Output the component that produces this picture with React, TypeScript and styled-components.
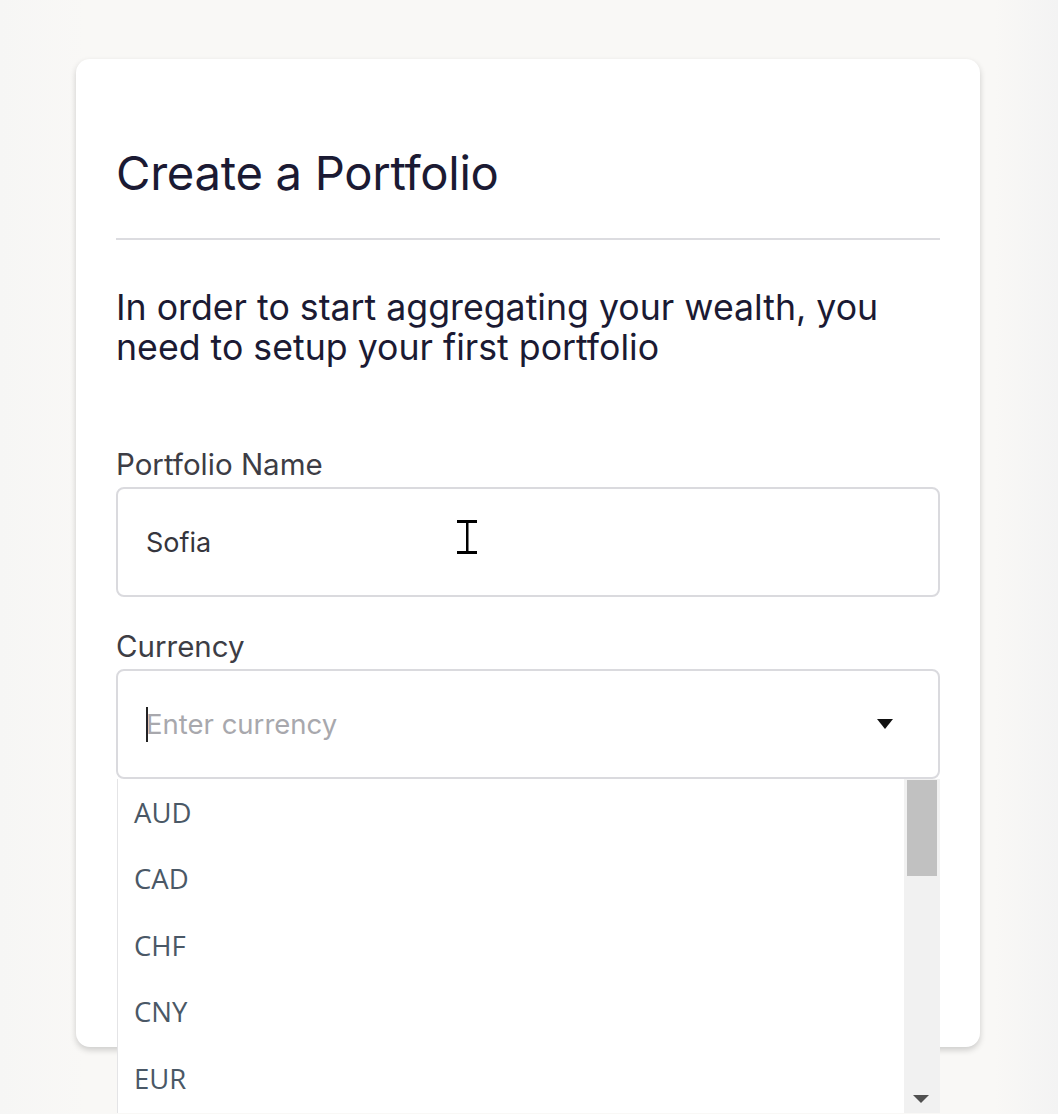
import React from "react";
import styled, { createGlobalStyle } from "styled-components";

const Global = createGlobalStyle`
  html, body { margin: 0; padding: 0; }
  body {
    background: linear-gradient(90deg, #f6f6f5 0%, #f9f8f6 8%, #f9f8f6 94%, #f3f3f3 100%);
    font-family: "Inter", "Open Sans", sans-serif;
    min-height: 1114px;
  }
`;

const Page = styled.div`
  display: flex;
  justify-content: center;
  padding: 59px 2px 0 0;
  height: 1114px;
  box-sizing: border-box;
  overflow: hidden;
`;

const Card = styled.section`
  width: 904px;
  height: 988px;
  box-sizing: border-box;
  background: #fff;
  border-radius: 14px;
  box-shadow: 0 3px 6px rgba(0, 0, 0, 0.18);
  padding: 86px 40px 40px;
  display: flex;
  flex-direction: column;
`;

const Title = styled.h1`
  margin: 0;
  font-size: 47.2px;
  font-weight: 400;
  line-height: 56px;
  color: #1b1a33;
  letter-spacing: -0.3px;
`;

const Divider = styled.hr`
  border: none;
  border-top: 2px solid #dcdce0;
  margin: 37px 0 0;
`;

const Intro = styled.p`
  margin: 47px 0 0;
  font-size: 35.7px;
  line-height: 40px;
  color: #1b1a33;
  font-weight: 400;
`;

const Field = styled.div<{ $top: number }>`
  margin-top: ${(p) => p.$top}px;
  display: flex;
  flex-direction: column;
  position: relative;
`;

const Label = styled.label`
  font-size: 29.5px;
  line-height: 34px;
  color: #3d3d45;
  margin-bottom: 6px;
`;

const InputBox = styled.div`
  height: 110px;
  box-sizing: border-box;
  border: 2px solid #dadade;
  border-radius: 8px;
  display: flex;
  align-items: center;
  padding: 0 28px;
  position: relative;
`;

const Value = styled.span<{ $placeholder?: boolean }>`
  font-size: ${(p) => (p.$placeholder ? "27.5px" : "27px")};
  color: ${(p) => (p.$placeholder ? "#a8a8ad" : "#35353d")};
  flex: 1;
  display: flex;
  align-items: center;
`;

const Caret = styled.span`
  display: inline-block;
  width: 2px;
  height: 35px;
  background: #222;
  margin-right: -2px;
`;

const Arrow = styled.svg`
  width: 18px;
  height: 12px;
  margin-right: 16px;
`;

const MouseCursor = styled.svg`
  position: absolute;
  left: 339px;
  top: 31px;
  width: 20px;
  height: 34px;
`;

const Dropdown = styled.div`
  position: absolute;
  left: -1px;
  right: -2px;
  top: calc(100% + 2px);
  height: 334px;
  background: #fff;
  border-left: 1px solid #e4e4e6;
  display: flex;
  z-index: 5;
`;

const List = styled.ul`
  list-style: none;
  margin: 0;
  padding: 0;
  flex: 1;
  overflow: hidden;
`;

const Item = styled.li`
  height: 66.5px;
  display: flex;
  align-items: center;
  padding-left: 16px;
  font-family: "Open Sans", sans-serif;
  font-size: 27.5px;
  color: #4a5866;
`;

const Track = styled.div`
  width: 36px;
  background: #f1f1f1;
  display: flex;
  flex-direction: column;
  justify-content: space-between;
  align-items: center;
`;

const Thumb = styled.div`
  width: 30px;
  height: 96px;
  background: #c1c1c1;
  margin-top: 1px;
  margin-right: 1px;
`;

const ScrollArrow = styled.svg`
  width: 16px;
  height: 10px;
  margin-bottom: 9px;
  margin-right: 2px;
`;

const currencies = ["AUD", "CAD", "CHF", "CNY", "EUR"];

export default function App() {
  return (
    <>
      <Global />
      <Page>
        <Card>
          <Title>Create a Portfolio</Title>
          <Divider />
          <Intro>
            In order to start aggregating your wealth, you
            <br />
            need to setup your first portfolio
          </Intro>
          <Field $top={80}>
            <Label>Portfolio Name</Label>
            <InputBox>
              <Value>Sofia</Value>
              <MouseCursor viewBox="0 0 20 34">
                <rect x="0" y="0" width="20" height="3" fill="#000" />
                <rect x="9" y="2" width="2.5" height="30" fill="#000" />
                <rect x="0" y="31" width="20" height="3" fill="#000" />
              </MouseCursor>
            </InputBox>
          </Field>
          <Field $top={32}>
            <Label>Currency</Label>
            <InputBox>
              <Value $placeholder>
                <Caret />
                Enter currency
              </Value>
              <Arrow viewBox="0 0 18 12">
                <path d="M1 1h16L9 11z" fill="#111" />
              </Arrow>
              <Dropdown>
                <List>
                  {currencies.map((c) => (
                    <Item key={c}>{c}</Item>
                  ))}
                </List>
                <Track>
                  <Thumb />
                  <ScrollArrow viewBox="0 0 16 10">
                    <path d="M0 1h16L8 9z" fill="#505050" />
                  </ScrollArrow>
                </Track>
              </Dropdown>
            </InputBox>
          </Field>
        </Card>
      </Page>
    </>
  );
}
